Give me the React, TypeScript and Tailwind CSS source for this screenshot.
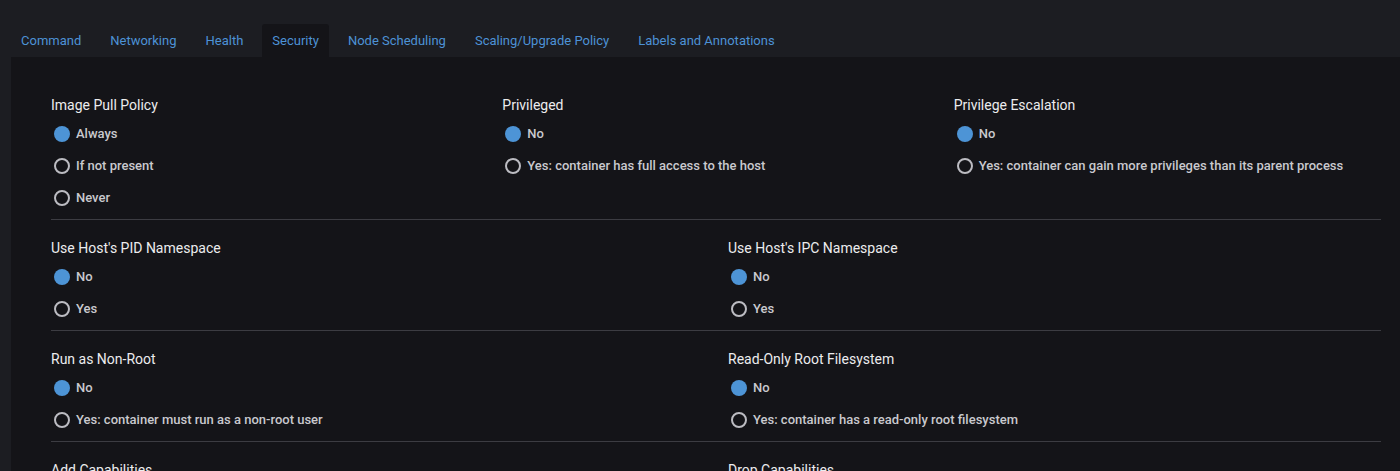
import React from 'react';

const tabs = [
  'Command',
  'Networking',
  'Health',
  'Security',
  'Node Scheduling',
  'Scaling/Upgrade Policy',
  'Labels and Annotations',
];

type Field = { title: string; options: string[] };

const rows: { cols: 'three' | 'two'; fields: Field[] }[] = [
  {
    cols: 'three',
    fields: [
      { title: 'Image Pull Policy', options: ['Always', 'If not present', 'Never'] },
      { title: 'Privileged', options: ['No', 'Yes: container has full access to the host'] },
      {
        title: 'Privilege Escalation',
        options: ['No', 'Yes: container can gain more privileges than its parent process'],
      },
    ],
  },
  {
    cols: 'two',
    fields: [
      { title: "Use Host's PID Namespace", options: ['No', 'Yes'] },
      { title: "Use Host's IPC Namespace", options: ['No', 'Yes'] },
    ],
  },
  {
    cols: 'two',
    fields: [
      { title: 'Run as Non-Root', options: ['No', 'Yes: container must run as a non-root user'] },
      { title: 'Read-Only Root Filesystem', options: ['No', 'Yes: container has a read-only root filesystem'] },
    ],
  },
  {
    cols: 'two',
    fields: [
      { title: 'Add Capabilities', options: [] },
      { title: 'Drop Capabilities', options: [] },
    ],
  },
];

function Radio({ label, checked }: { label: string; checked: boolean }) {
  return (
    <div className="flex h-8 items-center">
      {checked ? (
        <span className="ml-[3px] h-4 w-4 rounded-full bg-[#4d94d6]" />
      ) : (
        <span className="ml-[3px] h-4 w-4 rounded-full border-2 border-[#bcbcc2]" />
      )}
      <span className="ml-[6px] text-[13px] font-medium text-[#c9c9ce]">{label}</span>
    </div>
  );
}

function FieldBlock({ field }: { field: Field }) {
  return (
    <div>
      <div className="mb-[3px] h-5 text-[14px] leading-5 text-[#ececee]">{field.title}</div>
      {field.options.map((opt, i) => (
        <Radio key={opt} label={opt} checked={i === 0} />
      ))}
    </div>
  );
}

export default function App() {
  return (
    <div className="h-screen overflow-hidden bg-[#1c1d22] pt-6 font-['Roboto',sans-serif]">
      <div className="ml-[11px] flex h-[33px] items-stretch gap-[9px]">
        {tabs.map((t) => (
          <div
            key={t}
            className={
              t === 'Security'
                ? 'flex items-center rounded-t-[3px] bg-[#141418] px-[10px] text-[13px] text-[#4d92d6]'
                : 'flex items-center px-[10px] text-[13px] text-[#4d92d6]'
            }
          >
            {t}
          </div>
        ))}
      </div>
      <div className="ml-[11px] bg-[#141418] pl-10 pr-[19px] pt-5 pb-10">
        {rows.map((row, ri) => (
          <div
            key={ri}
            className={
              (ri > 0 ? 'border-t border-[#3c3c42] ' : '') +
              (row.cols === 'three' ? 'grid grid-cols-3 gap-6 pt-[18px] pb-[5px]' : 'grid grid-cols-2 gap-6 pt-[18px] pb-[5px]')
            }
          >
            {row.fields.map((f) => (
              <FieldBlock key={f.title} field={f} />
            ))}
          </div>
        ))}
      </div>
    </div>
  );
}
